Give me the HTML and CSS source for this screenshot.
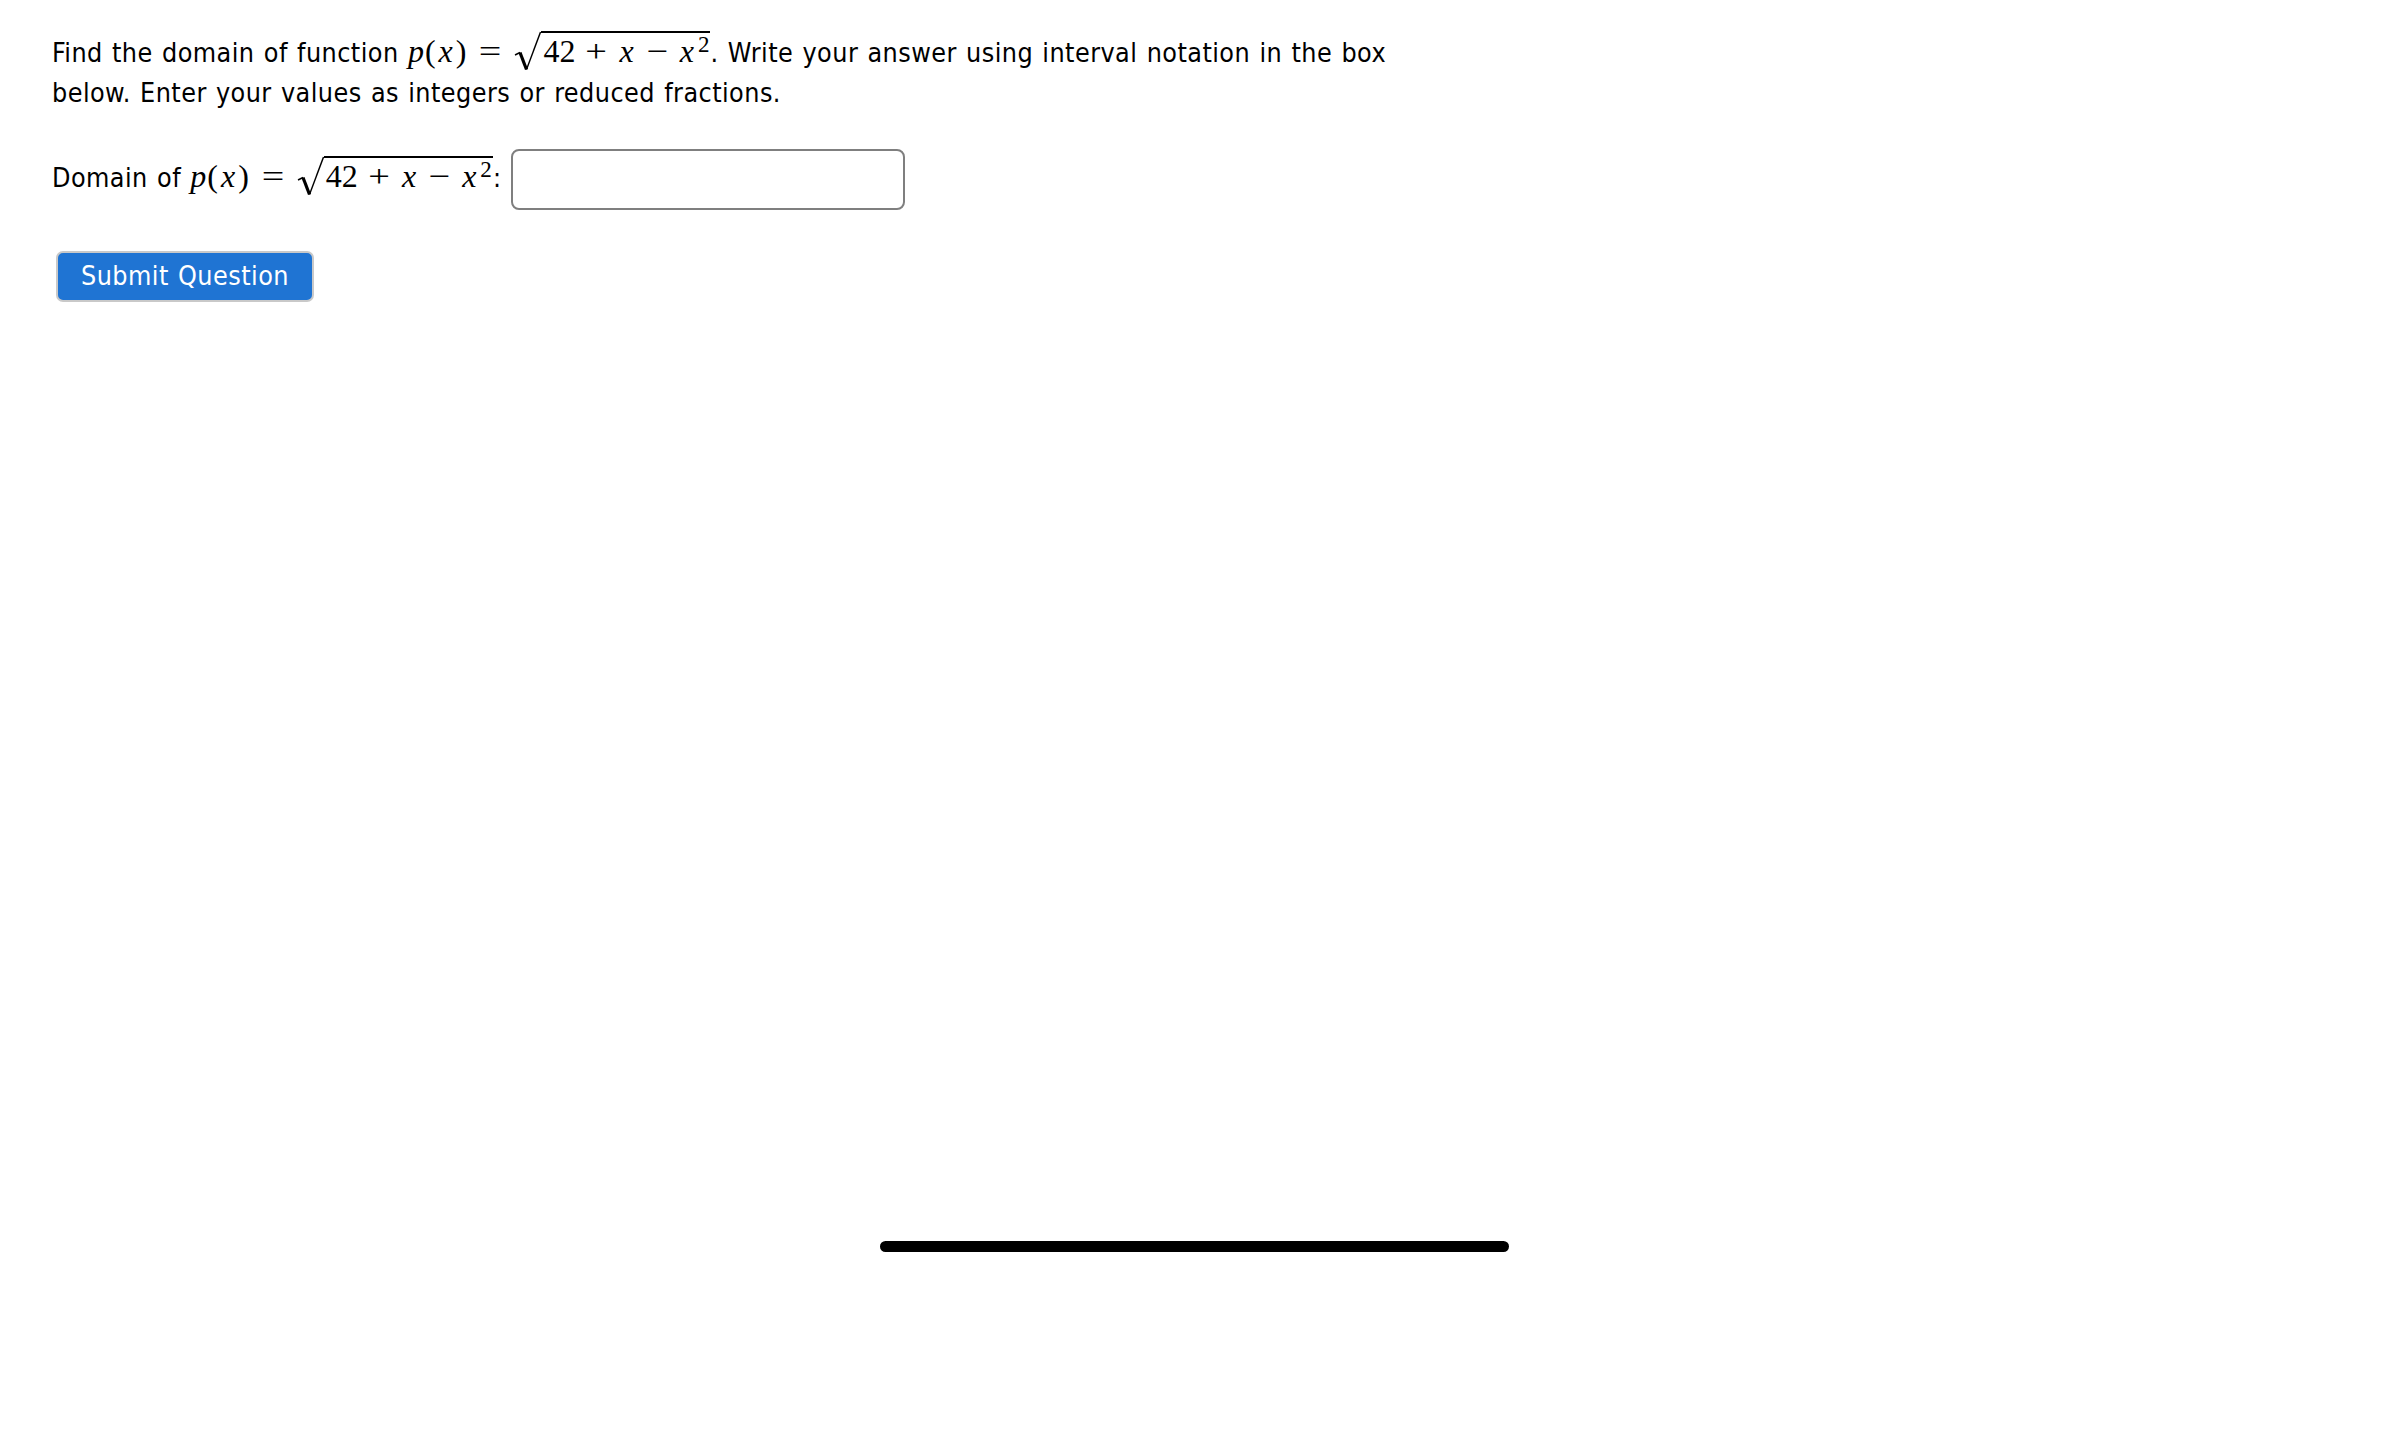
FILE: index.html
```html
<!DOCTYPE html>
<html lang="en">
<head>
<meta charset="utf-8">
<title>Question</title>
<link rel="stylesheet" href="styles.css">
</head>
<body>
<main class="page">
  <p class="intro">Find the domain of function <span class="math"><i>p</i><span class="paren">(</span><i class="vx">x</i><span class="paren">)</span><span class="rel">=</span><span class="sqrt"><svg class="rad" viewBox="0 0 28 40" preserveAspectRatio="none" aria-hidden="true"><path d="M2 24 L7 21.5" stroke="#000" stroke-width="1.4" fill="none"/><path d="M7 21.5 L13.5 38.5" stroke="#000" stroke-width="3.2" fill="none"/><path d="M13.5 38.5 L27.5 1" stroke="#000" stroke-width="1.4" fill="none"/></svg><span class="rad-body">42<span class="bin">+</span><i class="vx">x</i><span class="bin">−</span><i class="vx">x</i><sup>2</sup></span></span></span>. Write your answer using interval notation in the box below. Enter your values as integers or reduced fractions.</p>
  <p class="answer-row"><label for="ans">Domain of <span class="math"><i>p</i><span class="paren">(</span><i class="vx">x</i><span class="paren">)</span><span class="rel">=</span><span class="sqrt"><svg class="rad" viewBox="0 0 28 40" preserveAspectRatio="none" aria-hidden="true"><path d="M2 24 L7 21.5" stroke="#000" stroke-width="1.4" fill="none"/><path d="M7 21.5 L13.5 38.5" stroke="#000" stroke-width="3.2" fill="none"/><path d="M13.5 38.5 L27.5 1" stroke="#000" stroke-width="1.4" fill="none"/></svg><span class="rad-body">42<span class="bin">+</span><i class="vx">x</i><span class="bin">−</span><i class="vx">x</i><sup>2</sup></span></span></span>:</label> <input id="ans" class="answer-box" type="text"></p>
  <button class="submit" type="button">Submit Question</button>
</main>
<div class="home-indicator"></div>
</body>
</html>
```
FILE: styles.css
```css
html, body {
  margin: 0;
  padding: 0;
  background: #ffffff;
}

body {
  font-family: "DejaVu Sans", "Noto Sans", sans-serif;
  font-stretch: condensed;
  font-size: 26.67px;
  letter-spacing: 0.45px;
  word-spacing: 1.2px;
  color: #000000;
  height: 1454px;
  overflow: hidden;
}

.page {
  padding: 31px 52px 0 52px;
}

.intro {
  margin: 0;
  width: 1410px;
  line-height: 40px;
}

.math {
  font-family: "Liberation Serif", "DejaVu Serif", serif;
  font-stretch: normal;
  font-size: 32px;
  letter-spacing: 0;
  word-spacing: 0;
  white-space: nowrap;
}

.math i {
  font-style: italic;
}

.math .vx {
  padding: 0 2px;
}

.paren {
  padding: 0 1px;
}

.rel {
  display: inline-block;
  margin: 0 14px 0 14px;
  transform: scaleX(1.25);
}

.bin {
  display: inline-block;
  margin: 0 12px;
  transform: scaleX(1.2);
}

.sqrt {
  display: inline-flex;
  align-items: stretch;
}

.rad {
  width: 28px;
  flex: 0 0 28px;
  align-self: stretch;
}

.rad-body {
  align-self: baseline;
  border-top: 2px solid #000000;
  padding: 1px 1px 0 2px;
  line-height: 1.1;
}

.rad-body sup {
  font-size: 0.72em;
  vertical-align: 0.42em;
  line-height: 0;
  padding-left: 2px;
}

.answer-row {
  margin: 36px 0 0 0;
  line-height: 40px;
}

.answer-box {
  vertical-align: middle;
  box-sizing: border-box;
  width: 394px;
  height: 61px;
  margin: 0;
  border: 2px solid #7f7f7f;
  border-radius: 8px;
  background: #ffffff;
  padding: 0 10px;
  font: inherit;
}

.submit {
  display: block;
  margin: 41px 0 0 4px;
  box-sizing: border-box;
  height: 51px;
  padding: 0 23px;
  background: #1f74d3;
  color: #ffffff;
  border: 2px solid #c9c9c9;
  border-radius: 7px;
  font-family: "DejaVu Sans", "Noto Sans", sans-serif;
  font-stretch: condensed;
  font-size: 26.67px;
  letter-spacing: 0.45px;
  word-spacing: 1.2px;
  line-height: 1;
}

.home-indicator {
  position: fixed;
  left: 50%;
  bottom: 202px;
  width: 629px;
  height: 11px;
  margin-left: -314px;
  border-radius: 6px;
  background: #000000;
}
```
